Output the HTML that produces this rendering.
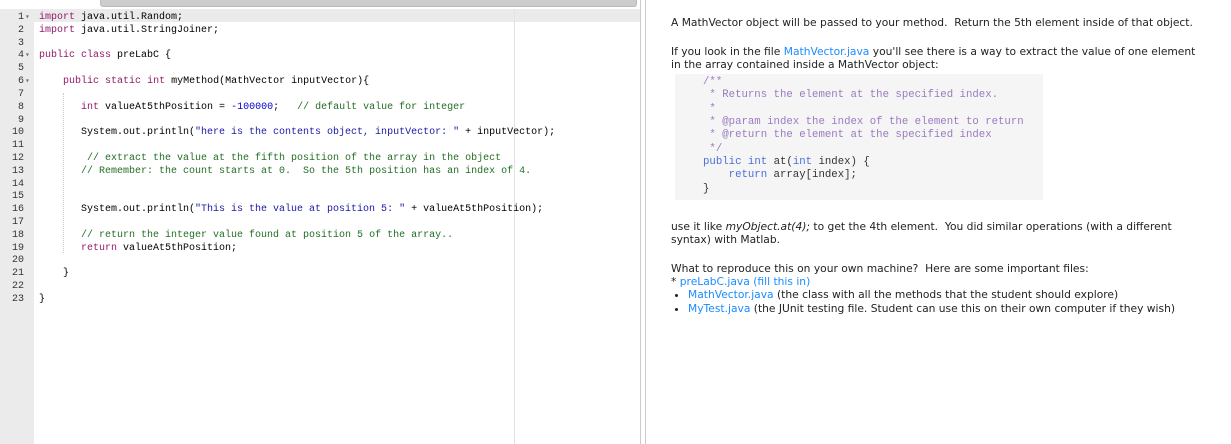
<!DOCTYPE html>
<html><head><meta charset="utf-8"><style>
*{margin:0;padding:0;box-sizing:border-box}
body{width:1231px;height:444px;background:#fff;position:relative;overflow:hidden;font-family:"Liberation Sans",sans-serif}
.topbar{position:absolute;left:100px;top:0;width:537px;height:7px;background:#ccc;border:1px solid #bbb;border-top:none;border-radius:0 0 3px 3px}
.gutter{position:absolute;left:0;top:9px;width:34px;height:435px;background:#ebebeb}
.active{position:absolute;left:0;top:9px;width:640px;height:13px;background:#ebebeb}
.pm{position:absolute;left:514px;top:9px;width:1px;height:435px;background:#e3e3e3}
.vl1{position:absolute;left:640px;top:0;width:1px;height:444px;background:#ccc}
.vl2{position:absolute;left:645px;top:0;width:1px;height:444px;background:#ccc}
.code{position:absolute;left:0;top:12px;font-family:"Liberation Mono",monospace;font-size:10px;line-height:12.82px}
.ln{display:block;position:relative;height:12.82px}
.n{position:absolute;left:0;width:24px;text-align:right;color:#333}
.f{position:absolute;left:25px;color:#777;font-size:8px}
.t{position:absolute;left:39px;white-space:pre}
.k{color:#931a68}.c{color:#236e24}.num{color:#0000cd}.s{color:#1a1aa6}
.guide{position:absolute;width:1px;border-left:1px dotted #ccc}
.right{position:absolute;left:671px;top:16px;font-family:"DejaVu Sans",sans-serif;font-size:10.7px;color:#222;line-height:13.3px;width:560px;white-space:nowrap}
.right p{margin:0}
a{color:#1a8cff;text-decoration:none}
.pre{background:#f5f5f5;margin:3px 0 0 4px;width:368px;padding:2px 0 4px 28px;font-family:"Liberation Mono",monospace;font-size:10.7px;line-height:13.3px;white-space:pre;color:#333}
.cm{color:#9a7cbf}.kw{color:#4b6fd6}
ul{margin:0;padding-left:17px}
</style></head><body>
<div class="topbar"></div>
<div class="gutter"></div>
<div class="active"></div>
<div class="pm"></div>
<div class="vl1"></div><div class="vl2"></div>
<div class="guide" style="top:93px;height:160px;left:63px"></div>
<div class="code"><span class="ln"><span class="n">1</span><span class="f">▾</span><span class="t"><span class="k">import</span> java.util.Random;</span></span><span class="ln"><span class="n">2</span><span class="t"><span class="k">import</span> java.util.StringJoiner;</span></span><span class="ln"><span class="n">3</span></span><span class="ln"><span class="n">4</span><span class="f">▾</span><span class="t"><span class="k">public</span> <span class="k">class</span> preLabC {</span></span><span class="ln"><span class="n">5</span></span><span class="ln"><span class="n">6</span><span class="f">▾</span><span class="t">    <span class="k">public</span> <span class="k">static</span> <span class="k">int</span> myMethod(MathVector inputVector){</span></span><span class="ln"><span class="n">7</span></span><span class="ln"><span class="n">8</span><span class="t">       <span class="k">int</span> valueAt5thPosition = <span class="num">-100000</span>;   <span class="c">// default value for integer</span></span></span><span class="ln"><span class="n">9</span></span><span class="ln"><span class="n">10</span><span class="t">       System.out.println(<span class="s">"here is the contents object, inputVector: "</span> + inputVector);</span></span><span class="ln"><span class="n">11</span></span><span class="ln"><span class="n">12</span><span class="t">        <span class="c">// extract the value at the fifth position of the array in the object</span></span></span><span class="ln"><span class="n">13</span><span class="t">       <span class="c">// Remember: the count starts at 0.  So the 5th position has an index of 4.</span></span></span><span class="ln"><span class="n">14</span></span><span class="ln"><span class="n">15</span></span><span class="ln"><span class="n">16</span><span class="t">       System.out.println(<span class="s">"This is the value at position 5: "</span> + valueAt5thPosition);</span></span><span class="ln"><span class="n">17</span></span><span class="ln"><span class="n">18</span><span class="t">       <span class="c">// return the integer value found at position 5 of the array..</span></span></span><span class="ln"><span class="n">19</span><span class="t">       <span class="k">return</span> valueAt5thPosition;</span></span><span class="ln"><span class="n">20</span></span><span class="ln"><span class="n">21</span><span class="t">    }</span></span><span class="ln"><span class="n">22</span></span><span class="ln"><span class="n">23</span><span class="t">}</span></span></div>
<div class="right">
<p>A MathVector object will be passed to your method.&nbsp; Return the 5th element inside of that object.</p>
<p>&nbsp;</p>
<p style="margin-top:2px">If you look in the file <a>MathVector.java</a> you'll see there is a way to extract the value of one element<br>in the array contained inside a MathVector object:</p>
<div class="pre"><span class="cm">/**
 * Returns the element at the specified index.
 *
 * @param index the index of the element to return
 * @return the element at the specified index
 */</span>
<span class="kw">public</span> <span class="kw">int</span> at(<span class="kw">int</span> index) {
    <span class="kw">return</span> array[index];
}</div>
<p style="margin-top:20px">use it like <i>myObject.at(4);</i> to get the 4th element.&nbsp; You did similar operations (with a different<br>syntax) with Matlab.</p>
<p>&nbsp;</p>
<p style="margin-top:2px">What to reproduce this on your own machine?&nbsp; Here are some important files:</p>
<p>* <a>preLabC.java (fill this in)</a></p>
<ul><li><a>MathVector.java</a> (the class with all the methods that the student should explore)</li>
<li><a>MyTest.java</a> (the JUnit testing file. Student can use this on their own computer if they wish)</li></ul>
</div>
</body></html>
